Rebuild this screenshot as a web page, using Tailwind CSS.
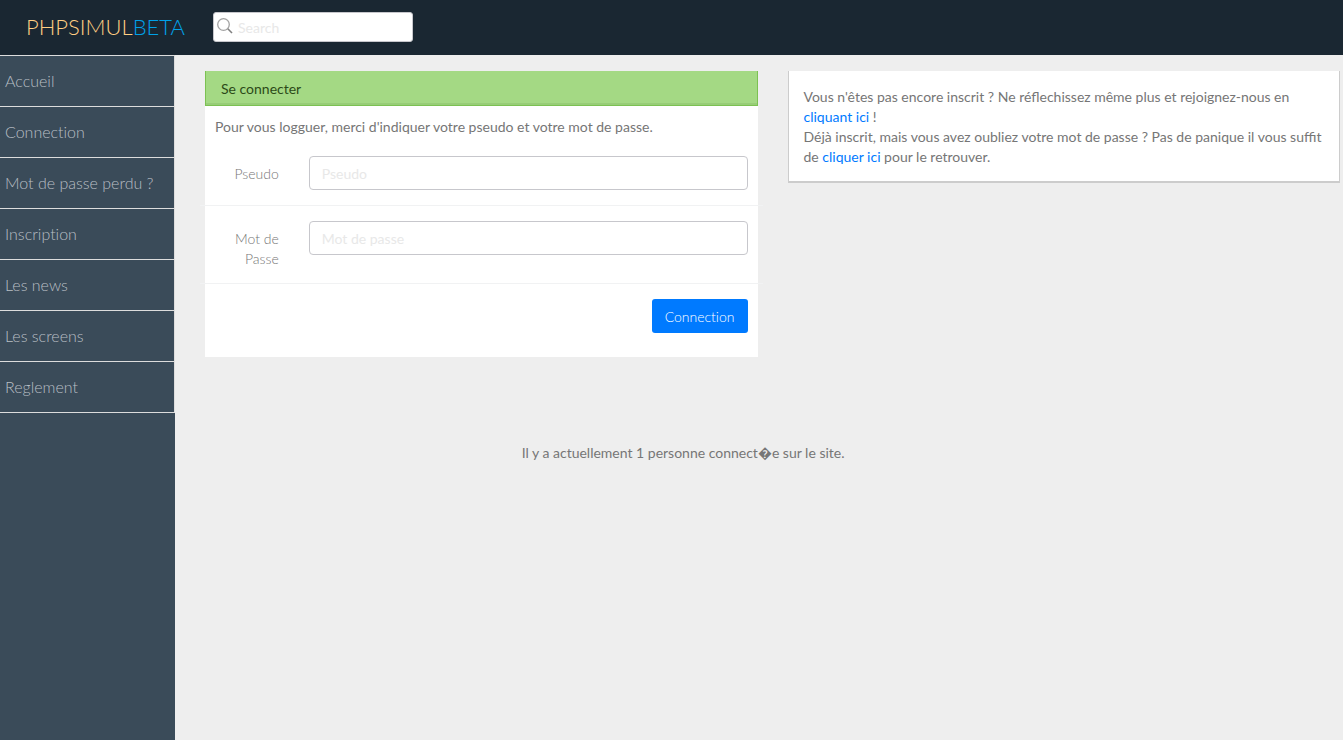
<!DOCTYPE html>
<html lang="fr">
<head>
    <meta charset="UTF-8">
    <meta name="viewport" content="width=device-width, initial-scale=1.0">
    <title>PHPSimul</title>
    <script src="https://cdn.jsdelivr.net/npm/@tailwindcss/browser@4"></script>
</head>
<body class="flex flex-col min-h-screen bg-[#eeeeee] font-['Lato',sans-serif] text-sm leading-5 text-[#767676]">
    <header class="flex items-center h-[55px] pb-px bg-[#1a2732]">
        <a href="#" class="w-[213px] pl-[26px] text-[22px] leading-8 font-light text-[#ffce83]">PHPSIMUL<span class="text-[#00a1e9]">BETA</span></a>
        <form class="relative w-[200px]">
            <svg class="absolute left-1 top-1 w-4 h-5" viewBox="0 0 16 20" fill="none" stroke="#a3a3a3">
                <circle cx="6.5" cy="8.5" r="5.8" stroke-width="1.3"/>
                <path d="M10.8 12.8L15 17" stroke="#808080" stroke-width="1.6"/>
            </svg>
            <input type="text" id="search" aria-label="Search" placeholder="Search" class="block w-full h-[30px] pl-6 pt-px bg-white border border-[#c7c7cc] rounded-[3px] placeholder:text-[#e8e8e8]">
        </form>
    </header>
    <div class="flex flex-1">
        <nav class="w-[175px] shrink-0 bg-[#3a4b59]">
            <ul class="border-t border-r border-[#dddddd] text-base leading-[50px] font-light text-[#b8bec4] [font-variant-ligatures:none]">
                <li class="border-b border-[#dddddd]"><a href="#" class="block pl-[5px]">Accueil</a></li>
                <li class="border-b border-[#dddddd]"><a href="#" class="block pl-[5px]">Connection</a></li>
                <li class="border-b border-[#dddddd]"><a href="#" class="block pl-[5px]">Mot de passe perdu ?</a></li>
                <li class="border-b border-[#dddddd]"><a href="#" class="block pl-[5px]">Inscription</a></li>
                <li class="border-b border-[#dddddd]"><a href="#" class="block pl-[5px]">Les news</a></li>
                <li class="border-b border-[#dddddd]"><a href="#" class="block pl-[5px]">Les screens</a></li>
                <li class="border-b border-[#dddddd]"><a href="#" class="block pl-[5px]">Reglement</a></li>
            </ul>
        </nav>
        <main class="flex-1 pt-4">
            <div class="grid grid-cols-2 gap-[30px] items-start pl-[30px] pr-[3px]">
                <section class="bg-white">
                    <h2 class="h-[35px] px-[15px] leading-9 bg-[#a4d984] border-x border-b border-[#7cc152] shadow-[inset_0_-2px_0_#97cd77] text-[#2c4a18]">Se connecter</h2>
                    <p class="px-[10px] pt-[11px] pb-[19px]">Pour vous logguer, merci d'indiquer votre pseudo et votre mot de passe.</p>
                    <!-- rows run 5px past the card on both sides -->
                    <form class="-mx-[5px]">
                        <div class="flex pb-[15px] border-b border-[#f1f2f3]">
                            <label for="pseudo" class="w-1/6 px-[15px] pt-2 text-right font-light">Pseudo</label>
                            <div class="w-5/6 px-[15px]">
                                <input type="text" id="pseudo" placeholder="Pseudo" class="block w-full h-[34px] px-3 pt-px bg-white border border-[#c7c7cc] rounded placeholder:text-[#e8e8e8]">
                            </div>
                        </div>
                        <div class="flex pt-[15px] pb-[14px] border-b border-[#f1f2f3]">
                            <label for="password" class="w-1/6 px-[15px] pt-2 text-right font-light">Mot de Passe</label>
                            <div class="w-5/6 px-[15px]">
                                <input type="password" id="password" placeholder="Mot de passe" class="block w-full h-[34px] px-3 pt-px bg-white border border-[#c7c7cc] rounded placeholder:text-[#e8e8e8]">
                            </div>
                        </div>
                        <div class="flex justify-end px-[15px] pt-[15px] pb-6">
                            <button type="submit" class="h-[34px] px-[13px] pt-px bg-[#007aff] rounded-[3px] font-light text-white [font-variant-ligatures:none]">Connection</button>
                        </div>
                    </form>
                </section>
                <section class="px-[15px] pt-4 pb-[14px] bg-white border-x border-b-2 border-[#cccccc]">
                    <p>Vous n'êtes pas encore inscrit ? Ne réflechissez même plus et rejoignez-nous en <a href="#" class="text-[#007aff]">cliquant ici</a> !</p>
                    <p>Déjà inscrit, mais vous avez oubliez votre mot de passe ? Pas de panique il vous suffit de <a href="#" class="text-[#007aff]">cliquer ici</a> pour le retrouver.</p>
                </section>
            </div>
            <footer class="w-[87%] pt-[86px] text-center">Il y a actuellement 1 personne connect&#xFFFD;e sur le site.</footer>
        </main>
    </div>
</body>
</html>
